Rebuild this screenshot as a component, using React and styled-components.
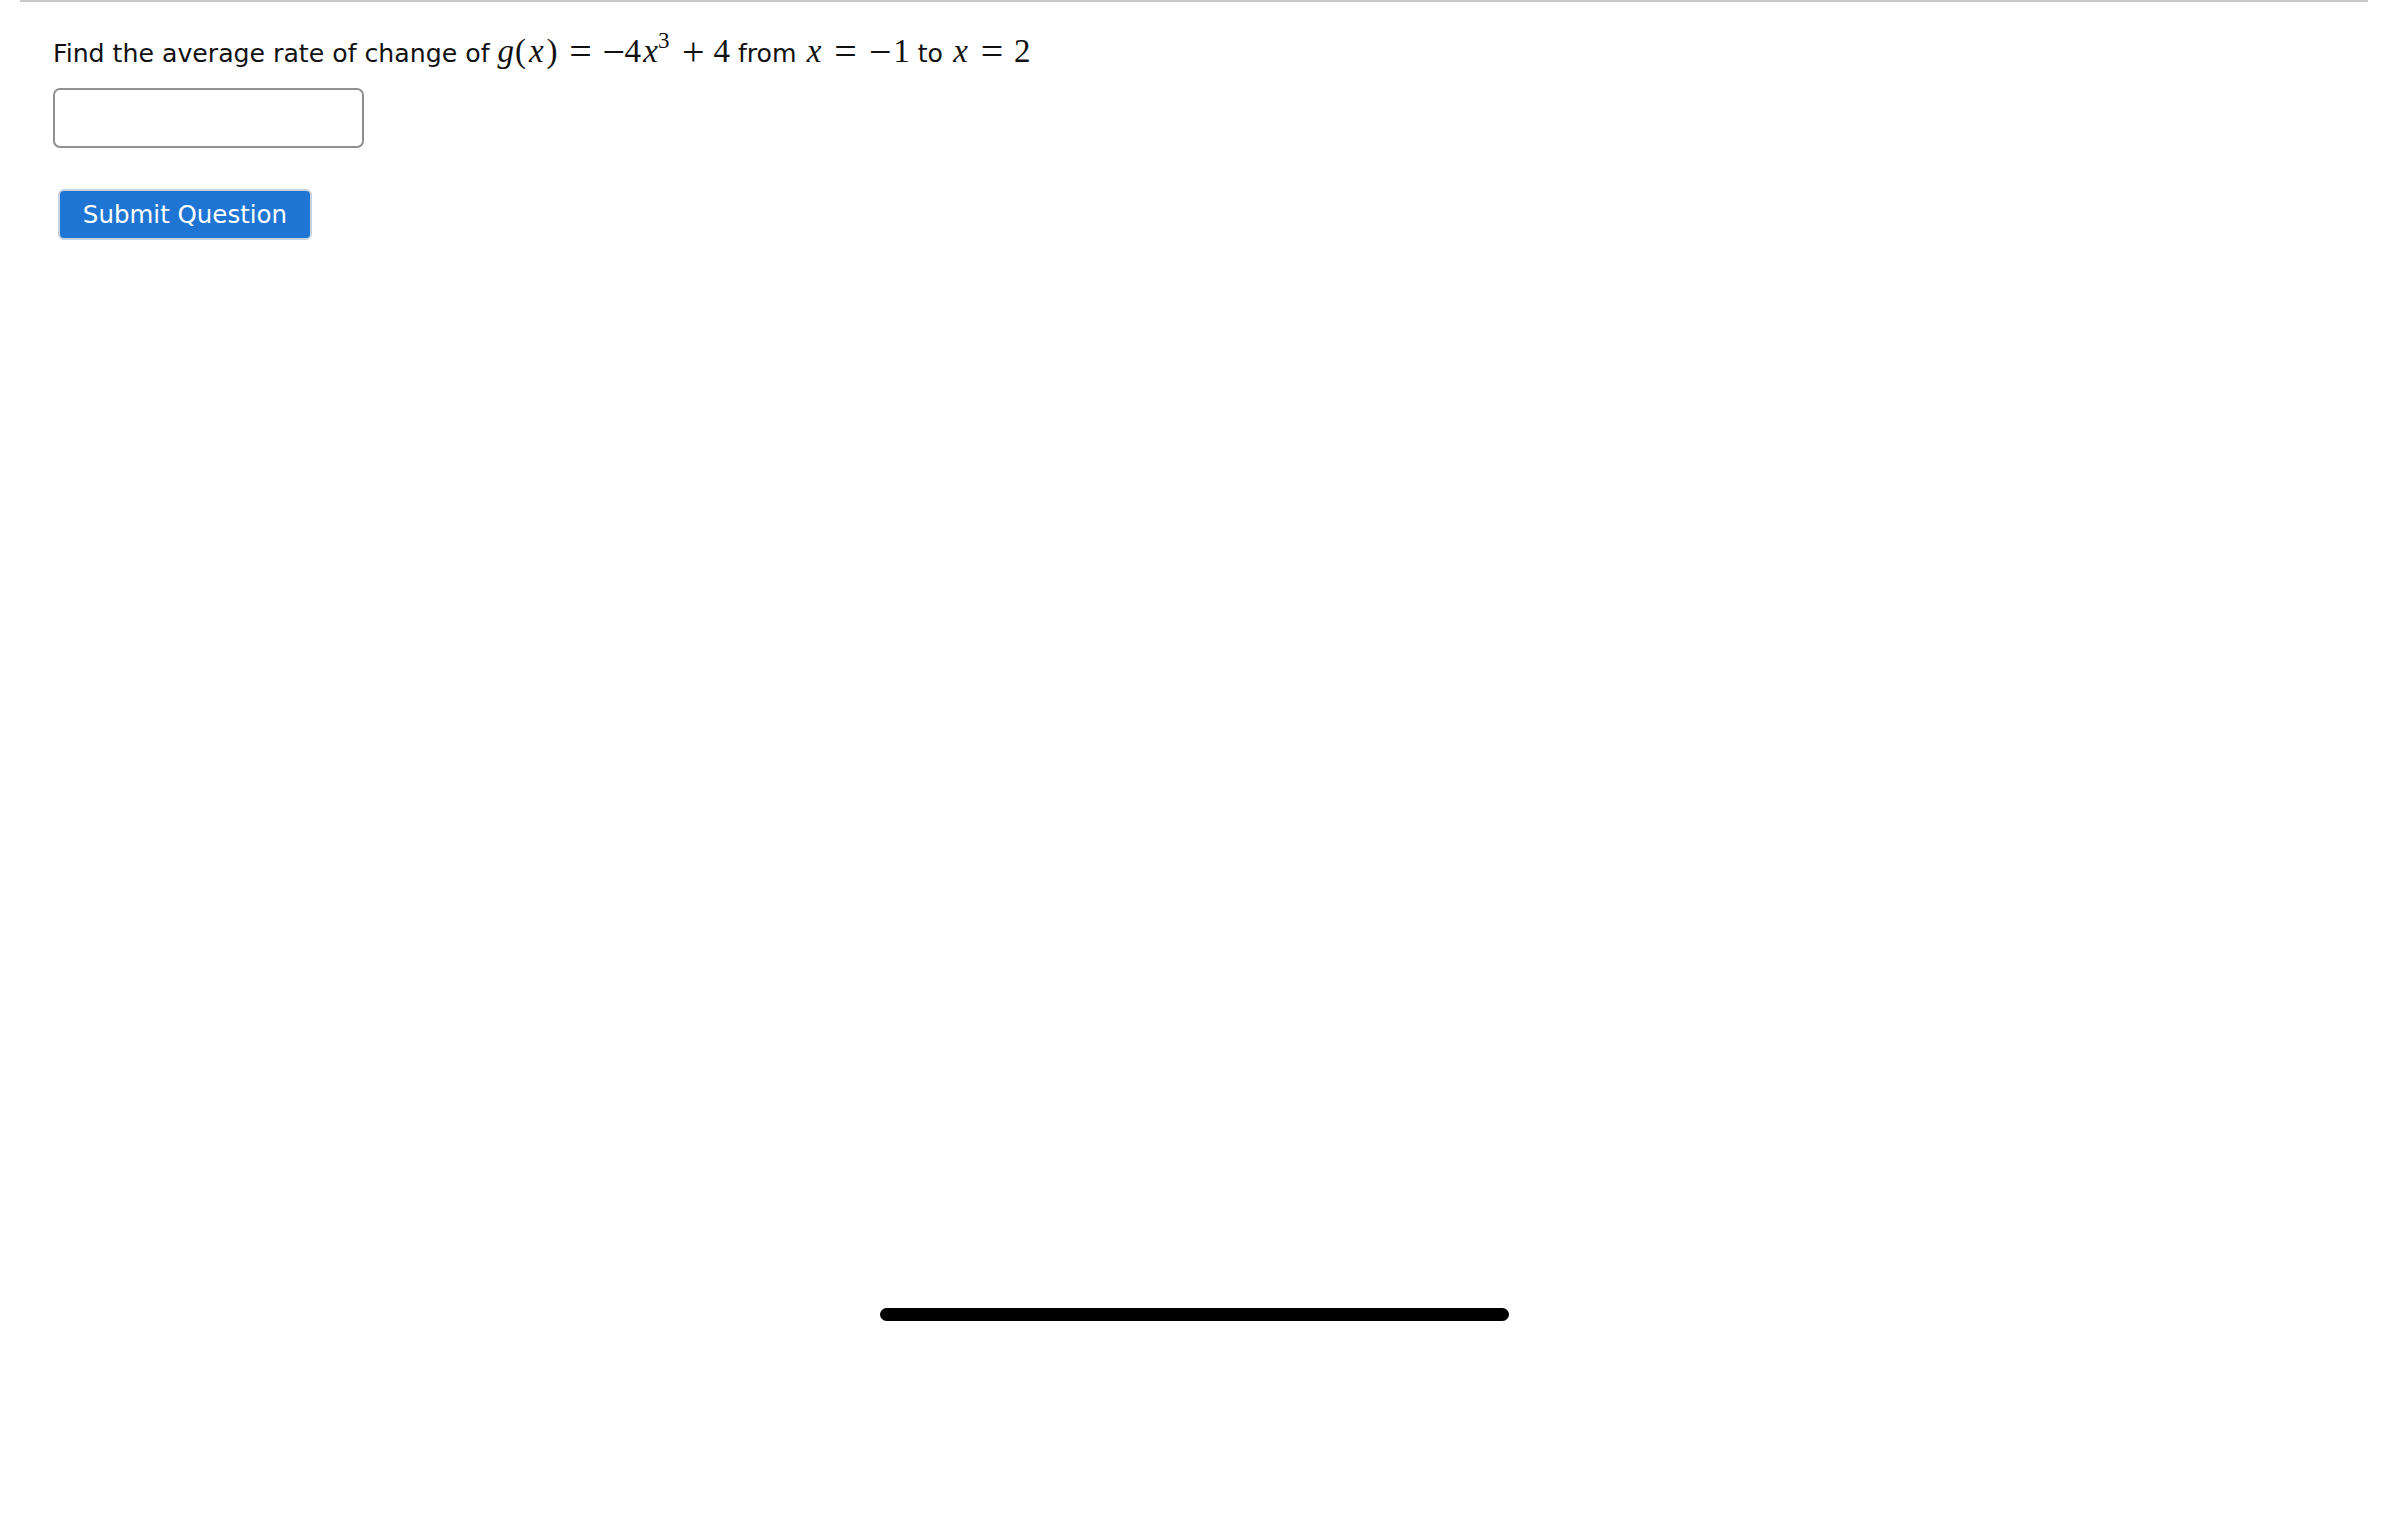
import React from "react";
import styled, { createGlobalStyle } from "styled-components";

const GlobalStyle = createGlobalStyle`
  html, body {
    margin: 0;
    padding: 0;
    background: #ffffff;
  }
  body {
    font-family: "DejaVu Sans", Verdana, sans-serif;
    color: #111111;
  }
`;

const Page = styled.div`
  position: relative;
  min-height: 100vh;
  box-sizing: border-box;
`;

const Frame = styled.main`
  margin: 0 20px;
  border-top: 2px solid #c8c8c8;
  padding: 32px 33px 0;
`;

const Question = styled.p`
  margin: 0;
  font-size: 25.2px;
  line-height: 40px;
  white-space: nowrap;
`;

/* one math atom: fixed advance width, like a TeX box */
const Atom = styled.span`
  display: inline-block;
  width: ${(p) => p.$w}px;
  margin: 0 ${(p) => p.$space || 0}px;
  text-align: ${(p) => (p.$align === "left" ? "left" : "center")};
  font-family: "Liberation Serif", "Times New Roman", serif;
  font-size: 33px;
  line-height: 0;
  font-style: ${(p) => (p.$italic ? "italic" : "normal")};
  white-space: nowrap;
`;

const OpAtom = styled(Atom)`
  font-size: 40px;
  font-style: normal;
  vertical-align: -3px;
`;

const SupAtom = styled(Atom)`
  font-size: 23px;
  vertical-align: 14px;
  text-align: left;
  margin-left: -2px;
`;

const AnswerInput = styled.input`
  display: block;
  box-sizing: border-box;
  width: 311px;
  height: 60px;
  margin-top: 14px;
  border: 2px solid #909090;
  border-radius: 7px;
  background: #ffffff;
  font-family: "DejaVu Sans", sans-serif;
  font-size: 25px;
  padding: 0 10px;
  outline: none;
`;

const SubmitButton = styled.button`
  display: inline-flex;
  align-items: center;
  justify-content: center;
  box-sizing: border-box;
  margin-top: 41px;
  margin-left: 5px;
  width: 254px;
  height: 51px;
  padding: 0;
  background: #1f75d3;
  color: #ffffff;
  border: 2px solid #c6d2e2;
  border-radius: 6px;
  font-family: "DejaVu Sans", Verdana, sans-serif;
  font-size: 24.5px;
  cursor: pointer;
`;

const HomeIndicator = styled.div`
  position: absolute;
  left: 50%;
  top: 1308px;
  width: 629px;
  height: 13px;
  margin-left: -314px;
  background: #000000;
  border-radius: 7px;
`;

const X = () => (
  <Atom $w={18.9} $italic>
    x
  </Atom>
);

export default function App() {
  return (
    <Page>
      <GlobalStyle />
      <Frame>
        <Question>
          Find the average rate of change of{" "}
          <Atom $w={16.5} $italic $align="left">g</Atom>
          <Atom $w={12.8}>(</Atom>
          <X />
          <Atom $w={12.8}>)</Atom>
          <OpAtom $w={25.7} $space={9.2}>=</OpAtom>
          <OpAtom $w={22}>−</OpAtom>
          <Atom $w={16.5}>4</Atom>
          <X />
          <SupAtom $w={15.2}>3</SupAtom>
          <OpAtom $w={25.7} $space={7.3}>+</OpAtom>
          <Atom $w={16.5}>4</Atom> from{" "}
          <X />
          <OpAtom $w={25.7} $space={9.2}>=</OpAtom>
          <OpAtom $w={25.7}>−</OpAtom>
          <Atom $w={16.5}>1</Atom> to{" "}
          <X />
          <OpAtom $w={25.7} $space={9.2}>=</OpAtom>
          <Atom $w={16.5}>2</Atom>
        </Question>
        <AnswerInput type="text" aria-label="Answer" />
        <SubmitButton type="button">Submit Question</SubmitButton>
      </Frame>
      <HomeIndicator />
    </Page>
  );
}
